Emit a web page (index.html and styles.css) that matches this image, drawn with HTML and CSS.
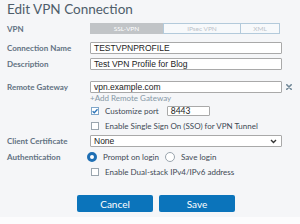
FILE: index.html
```
<!DOCTYPE html>
<html>
<head>
<meta charset="utf-8">
<link rel="stylesheet" href="styles.css">
</head>
<body>
<div class="page">
  <h1 class="title">Edit VPN Connection</h1>
  <div class="row r-vpn">
    <div class="label">VPN</div>
    <div class="seg">
      <span class="seg-item sel">SSL-VPN</span>
      <span class="seg-item ipsec">IPsec VPN</span>
      <span class="seg-item xml">XML</span>
    </div>
  </div>
  <div class="row r-name">
    <div class="label">Connection Name</div>
    <div class="input">TESTVPNPROFILE</div>
  </div>
  <div class="row r-desc">
    <div class="label">Description</div>
    <div class="input">Test VPN Profile for Blog</div>
  </div>
  <div class="row r-gw">
    <div class="label">Remote Gateway</div>
    <div class="input">vpn.example.com</div>
    <svg class="del" width="6" height="6" viewBox="0 0 6 6"><path d="M0.8 0.8L5.2 5.2M5.2 0.8L0.8 5.2" stroke="#6f8696" stroke-width="1.6" stroke-linecap="round"/></svg>
  </div>
  <div class="row r-add">
    <div class="label"></div>
    <div class="add">+Add Remote Gateway</div>
  </div>
  <div class="row r-port">
    <div class="label"></div>
    <span class="cb checked"><svg width="8" height="8" viewBox="0 0 8 8"><path d="M1.6 4.2L3.3 5.8L6.5 2.2" fill="none" stroke="#2a73b8" stroke-width="1.3"/></svg></span>
    <span class="opt">Customize port</span>
    <div class="input port">8443</div>
  </div>
  <div class="row r-sso">
    <div class="label"></div>
    <span class="cb"></span>
    <span class="opt">Enable Single Sign On (SSO) for VPN Tunnel</span>
  </div>
  <div class="row r-cert">
    <div class="label">Client Certificate</div>
    <div class="input select">None<svg class="chev" width="7" height="5" viewBox="0 0 7 5"><path d="M1 1L3.5 3.5L6 1" fill="none" stroke="#333" stroke-width="1.4"/></svg></div>
  </div>
  <div class="row r-auth">
    <div class="label">Authentication</div>
    <span class="radio on"></span>
    <span class="opt">Prompt on login</span>
    <span class="radio off"></span>
    <span class="opt">Save login</span>
  </div>
  <div class="row r-dual">
    <div class="label"></div>
    <span class="cb"></span>
    <span class="opt">Enable Dual-stack IPv4/IPv6 address</span>
  </div>
  <div class="buttons">
    <button class="btn">Cancel</button>
    <button class="btn">Save</button>
  </div>
</div>
<div class="footer"></div>
</body>
</html>
```
FILE: styles.css
```
html, body {
  margin: 0;
  padding: 0;
  background: #f5f6f8;
  font-family: Lato, "Liberation Sans", sans-serif;
  overflow: hidden;
}
.page {
  padding: 0 7px;
  height: 217px;
}
.title {
  margin: 0;
  padding-top: 1px;
  font-size: 13.5px;
  line-height: 16px;
  font-weight: 400;
  color: #4e5d6a;
}
.row {
  display: flex;
  align-items: center;
}
.label {
  width: 83px;
  flex: none;
  font-size: 8px;
  font-weight: 700;
  color: #627282;
}
.r-vpn { margin-top: 6px; height: 11px; }
.r-name { margin-top: 8px; height: 12px; }
.r-desc { margin-top: 4px; height: 12px; }
.r-gw { margin-top: 11px; height: 12px; }
.r-add { margin-top: 1px; height: 8px; }
.r-port { margin-top: 4px; height: 10px; }
.r-sso { margin-top: 5px; height: 10px; }
.r-cert { margin-top: 4px; height: 12px; }
.r-auth { margin-top: 5px; height: 10px; }
.r-dual { margin-top: 5px; height: 10px; }

.seg {
  display: flex;
  height: 11px;
}
.seg-item {
  box-sizing: border-box;
  height: 11px;
  font-size: 6.5px;
  line-height: 9px;
  text-align: center;
  color: #bcc3ca;
  background: #f7f9fb;
  border: 1px solid #b3cadb;
}
.seg-item.sel {
  width: 73px;
  background: #c1c4c7;
  border-color: #c1c4c7;
  color: #ffffff;
}
.ipsec { width: 77px; border-right: none; }
.xml { width: 40px; }

.input {
  box-sizing: border-box;
  width: 192px;
  height: 12px;
  background: #fff;
  border: 1px solid #a9a9a9;
  border-radius: 1px;
  font-family: "Liberation Sans", Arial, sans-serif;
  font-size: 8.5px;
  line-height: 10px;
  padding-left: 3px;
  color: #222;
}
.del { margin-left: 4px; }
.add {
  font-size: 8px;
  line-height: 8px;
  color: #8798a6;
}
.cb {
  box-sizing: border-box;
  width: 8px;
  height: 8px;
  border: 1px solid #9aa5ae;
  background: #fff;
  flex: none;
  margin-left: 1px;
  display: flex;
  align-items: center;
  justify-content: center;
}
.cb.checked {
  border-color: #7fa6c9;
}
.cb.checked svg { margin: -1px; }
.opt {
  font-size: 8px;
  color: #3e4954;
  margin-left: 6px;
  white-space: nowrap;
}
.port {
  width: 43px;
  height: 10px;
  line-height: 8px;
  margin-left: 8px;
  font-family: Lato, sans-serif;
}
.select {
  position: relative;
}
.chev {
  position: absolute;
  right: 4px;
  top: 3px;
}
.radio {
  box-sizing: border-box;
  width: 10px;
  height: 10px;
  border-radius: 50%;
  border: 1px solid #9aa5ae;
  background: #fff;
  flex: none;
}
.radio.on {
  margin-left: -3px;
  border: 3px solid #1f6fb4;
}
.radio.off { margin-left: 6px; }
.buttons {
  display: flex;
  gap: 6px;
  margin-top: 18px;
  padding-left: 70px;
}
.btn {
  box-sizing: border-box;
  width: 76px;
  height: 17px;
  border: none;
  border-radius: 2px;
  background: #0b74bb;
  color: #fff;
  font-family: Lato, sans-serif;
  font-size: 10px;
  padding: 0;
}
.footer {
  background: #fcfcfd;
  height: 10px;
}
```
